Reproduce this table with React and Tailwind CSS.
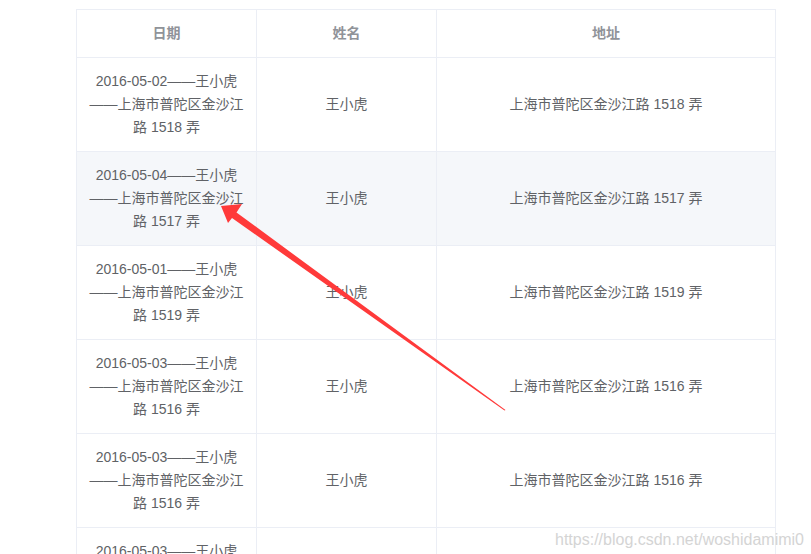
import React from "react";

const rows = [
  { date: "2016-05-02", no: "1518" },
  { date: "2016-05-04", no: "1517" },
  { date: "2016-05-01", no: "1519" },
  { date: "2016-05-03", no: "1516" },
  { date: "2016-05-03", no: "1516" },
  { date: "2016-05-03", no: "1516" },
];

const Arrow = () => (
  <svg
    className="absolute left-0 top-0 pointer-events-none"
    width="811"
    height="554"
    viewBox="0 0 811 554"
  >
    <polygon
      points="221,206 242,204 236.5,212.5 505.5,410 504.5,410.5 232,218 228,223"
      fill="#ff3a3a"
    />
  </svg>
);

export default function App() {
  return (
    <div
      className="relative w-[811px] h-[554px] overflow-hidden bg-white"
      style={{ fontFamily: '"Liberation Sans", "Noto Sans CJK SC", sans-serif' }}
    >
      <div className="ml-[76px] mt-[9px] w-[700px] border-l border-t border-[#ebeef5] text-[14px] leading-[23px] text-center">
        <div className="flex">
          <div className="w-[180px] border-r border-b border-[#ebeef5] py-3 px-[10px] font-bold text-[#909399]">日期</div>
          <div className="w-[180px] border-r border-b border-[#ebeef5] py-3 px-[10px] font-bold text-[#909399]">姓名</div>
          <div className="w-[339px] border-r border-b border-[#ebeef5] py-3 px-[10px] font-bold text-[#909399]">地址</div>
        </div>
        {rows.map((r, i) => (
          <div key={i} className={i === 1 ? "flex bg-[#f5f7fa] text-[#606266]" : "flex text-[#606266]"}>
            <div className="w-[180px] border-r border-b border-[#ebeef5] py-3 px-[10px]">
              <span className="block">{r.date}——王小虎</span>
              <span className="block">——上海市普陀区金沙江</span>
              <span className="block">路 {r.no} 弄</span>
            </div>
            <div className="w-[180px] border-r border-b border-[#ebeef5] py-3 px-[10px] flex items-center justify-center">
              王小虎
            </div>
            <div className="w-[339px] border-r border-b border-[#ebeef5] py-3 px-[10px] flex items-center justify-center">
              上海市普陀区金沙江路 {r.no} 弄
            </div>
          </div>
        ))}
      </div>
      <Arrow />
      <div className="absolute left-[555px] top-[531px] text-[16px] leading-[18px] text-[#d4d4d4] whitespace-nowrap">
        https://blog.csdn.net/woshidamimi0
      </div>
    </div>
  );
}
